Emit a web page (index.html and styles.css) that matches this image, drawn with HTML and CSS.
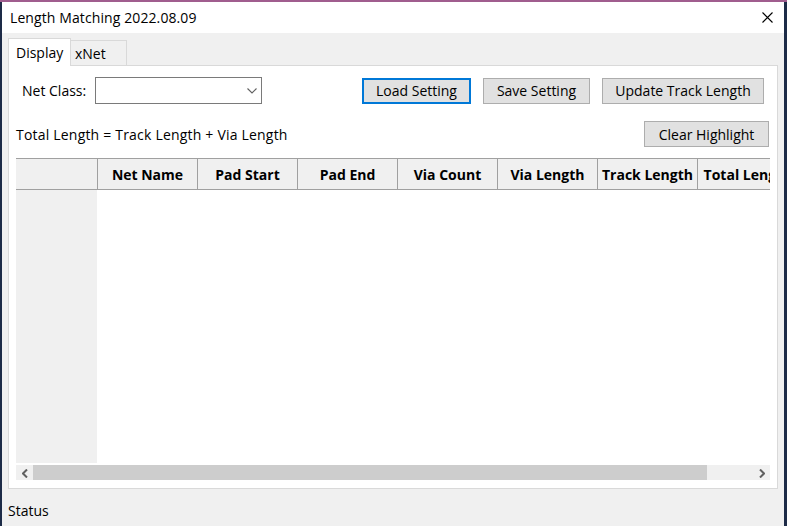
FILE: index.html
```html
<!DOCTYPE html>
<html lang="en">
<head>
    <meta charset="UTF-8">
    <meta name="viewport" content="width=device-width, initial-scale=1.0">
    <title>Length Matching 2022.08.09</title>
    <link rel="stylesheet" href="styles.css">
</head>
<body>

    <div class="window">
        <div class="titlebar">
            <span class="title">Length Matching 2022.08.09</span>
            <svg class="close" width="11" height="11" viewBox="0 0 11 11">
                <path d="M0.5 0.5 L10.5 10.5 M10.5 0.5 L0.5 10.5" stroke="#000" stroke-width="1.1" fill="none"/>
            </svg>
        </div>

        <div class="client">
            <div class="tabs">
                <div class="tab active">Display</div>
                <div class="tab">xNet</div>
            </div>

            <div class="panel">
                <div class="row-top">
                    <label class="field-label" for="netClass">Net Class:</label>
                    <div class="combo" id="netClass">
                        <svg width="10" height="6" viewBox="0 0 10 6">
                            <path d="M0.5 0.5 L5 5 L9.5 0.5" stroke="#606060" stroke-width="1.1" fill="none"/>
                        </svg>
                    </div>
                    <button class="btn btn-default btn-load">Load Setting</button>
                    <button class="btn btn-save">Save Setting</button>
                    <button class="btn btn-update">Update Track Length</button>
                </div>

                <div class="row-second">
                    <span class="formula">Total Length = Track Length + Via Length</span>
                    <button class="btn btn-clear">Clear Highlight</button>
                </div>

                <div class="grid">
                    <div class="grid-head">
                        <div class="cell corner"></div>
                        <div class="cell">Net Name</div>
                        <div class="cell">Pad Start</div>
                        <div class="cell">Pad End</div>
                        <div class="cell">Via Count</div>
                        <div class="cell">Via Length</div>
                        <div class="cell">Track Length</div>
                        <div class="cell">Total Length</div>
                    </div>
                    <div class="grid-body">
                        <div class="row-headers"></div>
                    </div>
                    <div class="hscroll">
                        <div class="arrow">
                            <svg width="6" height="9" viewBox="0 0 6 9">
                                <path d="M5 0.5 L1 4.5 L5 8.5" stroke="#606060" stroke-width="2" fill="none"/>
                            </svg>
                        </div>
                        <div class="thumb"></div>
                        <div class="track"></div>
                        <div class="arrow">
                            <svg width="6" height="9" viewBox="0 0 6 9">
                                <path d="M1 0.5 L5 4.5 L1 8.5" stroke="#606060" stroke-width="2" fill="none"/>
                            </svg>
                        </div>
                    </div>
                </div>
            </div>

            <div class="status">Status</div>
        </div>
    </div>

</body>
</html>
```

FILE: styles.css
```css
/* Desktop behind the dialog */
body {
    margin: 0;
    background-color: #1d2b47;
    border-top: 2px solid #a05d8e;
    font-family: "Open Sans", "Noto Sans", sans-serif;
    font-size: 14px;
    color: #000;
    overflow: hidden;
    height: 524px;
}

.window {
    margin-left: 2px;
    width: 782px;
    height: 524px;
    display: flex;
    flex-direction: column;
}

/* Title bar */
.titlebar {
    height: 31px;
    background-color: #fff;
    display: flex;
    align-items: center;
    padding: 0 10px 0 8px;
}

.title {
    flex: 1;
    font-size: 14px;
    letter-spacing: 0.1px;
}

.close {
    margin-right: 1px;
}

/* Window body */
.client {
    flex: 1;
    background-color: #f0f0f0;
    padding: 5px 5px 0 6px;
}

.tabs {
    display: flex;
    align-items: flex-end;
    height: 27px;
}

.tab {
    box-sizing: border-box;
    width: 56px;
    height: 25px;
    padding: 1px 0 0 4px;
    border: 1px solid #d9d9d9;
    border-bottom: none;
    border-left: none;
    background-color: #f0f0f0;
    display: flex;
    align-items: center;
}

.tab.active {
    width: 63px;
    height: 28px;
    margin-bottom: -1px;
    padding: 0 0 0 7px;
    border-left: 1px solid #d9d9d9;
    background-color: #fff;
    position: relative;
    z-index: 1;
}

.panel {
    box-sizing: border-box;
    width: 770px;
    height: 424px;
    background-color: #fff;
    border: 1px solid #d9d9d9;
    padding: 11px 0 0 7px;
}

/* Top controls */
.row-top {
    display: flex;
    align-items: center;
    height: 27px;
}

.field-label {
    margin-left: 6px;
    width: 73px;
}

.combo {
    box-sizing: border-box;
    width: 167px;
    height: 27px;
    border: 1px solid #7a7a7a;
    display: flex;
    align-items: center;
    justify-content: flex-end;
    padding-right: 4px;
}

.btn {
    font-family: inherit;
    font-size: 14px;
    height: 26px;
    background-color: #e1e1e1;
    border: 1px solid #adadad;
    padding: 0;
    color: #000;
}

.btn-default {
    border: 2px solid #0078d7;
}

.btn-load {
    margin-left: 100px;
    width: 109px;
}

.btn-save {
    margin-left: 12px;
    width: 107px;
}

.btn-update {
    margin-left: 12px;
    width: 162px;
}

.row-second {
    display: flex;
    align-items: center;
    margin-top: 17px;
    height: 26px;
    width: 753px;
}

.formula {
    flex: 1;
    letter-spacing: 0.2px;
}

.btn-clear {
    width: 125px;
}

/* Data grid */
.grid {
    margin-top: 11px;
    width: 754px;
    height: 322px;
    overflow: hidden;
    display: flex;
    flex-direction: column;
}

.grid-head {
    display: flex;
    height: 32px;
    flex-shrink: 0;
}

.grid-head .cell {
    flex: 0 0 100px;
    box-sizing: border-box;
    background-color: #f0f0f0;
    border-top: 1px solid #a0a0a0;
    border-bottom: 1px solid #a0a0a0;
    border-left: 1px solid #a0a0a0;
    display: flex;
    align-items: center;
    justify-content: center;
    font-weight: bold;
    white-space: nowrap;
}

.grid-head .cell.corner {
    flex-basis: 81px;
    border-left: none;
}

.grid-body {
    flex: 1;
    display: flex;
}

.row-headers {
    width: 81px;
    height: 273px;
    background-color: #f0f0f0;
}

.hscroll {
    display: flex;
    height: 16px;
    margin-top: 2px;
    flex-shrink: 0;
}

.hscroll .arrow {
    width: 17px;
    background-color: #f0f0f0;
    display: flex;
    align-items: center;
    justify-content: center;
}

.hscroll .thumb {
    width: 674px;
    background-color: #cdcdcd;
}

.hscroll .track {
    flex: 1;
    background-color: #f0f0f0;
}

.status {
    margin: 12px 0 0 0;
}
```
